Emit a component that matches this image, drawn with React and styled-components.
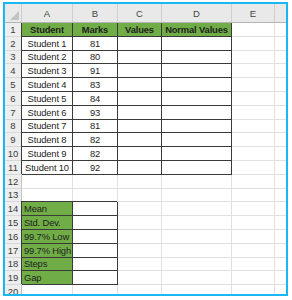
import React from "react";
import styled, { createGlobalStyle } from "styled-components";

const GlobalStyle = createGlobalStyle`
  html, body {
    margin: 0;
    padding: 0;
    background: #ffffff;
  }
  body {
    font-family: "Liberation Sans", Arial, sans-serif;
  }
`;

const Page = styled.div`
  width: 292px;
  height: 300px;
  padding: 2px 0 0 3px;
  box-sizing: border-box;
`;

const Frame = styled.div`
  width: 285px;
  height: 294px;
  box-sizing: border-box;
  border: 2px solid #1ab8f3;
  overflow: hidden;
  background: #fff;
`;

const Sheet = styled.div`
  display: grid;
  grid-template-columns: 17px 51px 45px 44px 70px 43px 20px;
  grid-template-rows: 19px repeat(20, 13.8px);
  font-size: 9.4px;
  letter-spacing: -0.15px;
  color: #1e1e1e;
`;

const ColHead = styled.div`
  background: #e9e9e9;
  border-right: 1px solid #cfcfcf;
  border-bottom: 1px solid #b4b4b4;
  display: flex;
  align-items: center;
  justify-content: center;
  color: #444;
  font-size: 9.5px;
  letter-spacing: 0;
  position: relative;
`;

const Corner = styled(ColHead)`
  &::after {
    content: "";
    position: absolute;
    right: 2px;
    bottom: 2px;
    width: 0;
    height: 0;
    border-left: 9px solid transparent;
    border-bottom: 9px solid #c3c3c3;
  }
`;

const RowHead = styled.div`
  background: #eeeeee;
  border-right: 1px solid #c3c3c3;
  border-bottom: 1px solid #d8d8d8;
  display: flex;
  align-items: center;
  justify-content: center;
  color: #3a3a3a;
  font-size: 9.5px;
  letter-spacing: 0;
`;

const Cell = styled.div`
  box-sizing: border-box;
  display: flex;
  align-items: center;
  justify-content: ${({ $left }) => ($left ? "flex-start" : "center")};
  padding-left: ${({ $left }) => ($left ? "2px" : "0")};
  white-space: nowrap;
  overflow: hidden;
  background: ${({ $green }) => ($green ? "#70ad47" : "#fff")};
  font-weight: ${({ $bold }) => ($bold ? 700 : 400)};
  border-right: 1px solid ${({ $boxed }) => ($boxed ? "#3a3a3a" : "#e0e0e0")};
  border-bottom: 1px solid ${({ $boxed }) => ($boxed ? "#3a3a3a" : "#e0e0e0")};
  box-shadow: ${({ $boxed }) => ($boxed ? "-1px -1px 0 #3a3a3a" : "none")};
`;

const cols = ["A", "B", "C", "D", "E", ""];

const marks = [81, 80, 91, 83, 84, 93, 81, 82, 82, 92];

const stats = ["Mean", "Std. Dev.", "99.7% Low", "99.7% High", "Steps", "Gap"];

const App = () => {
  const rows = [];
  for (let r = 1; r <= 20; r++) {
    const cells = [];
    if (r === 1) {
      cells.push(
        <Cell key="a" $green $boxed $bold>Student</Cell>,
        <Cell key="b" $green $boxed $bold>Marks</Cell>,
        <Cell key="c" $green $boxed $bold>Values</Cell>,
        <Cell key="d" $green $boxed $bold>Normal Values</Cell>
      );
    } else if (r <= 11) {
      cells.push(
        <Cell key="a" $boxed>Student {r - 1}</Cell>,
        <Cell key="b" $boxed>{marks[r - 2]}</Cell>,
        <Cell key="c" $boxed />,
        <Cell key="d" $boxed />
      );
    } else if (r >= 14 && r <= 19) {
      cells.push(
        <Cell key="a" $green $boxed $left>{stats[r - 14]}</Cell>,
        <Cell key="b" $boxed />,
        <Cell key="c" />,
        <Cell key="d" />
      );
    } else {
      cells.push(<Cell key="a" />, <Cell key="b" />, <Cell key="c" />, <Cell key="d" />);
    }
    rows.push(
      <React.Fragment key={r}>
        <RowHead>{r}</RowHead>
        {cells}
        <Cell />
        <Cell />
      </React.Fragment>
    );
  }

  return (
    <Page>
      <GlobalStyle />
      <Frame>
        <Sheet>
          <Corner />
          {cols.map((c, i) => (
            <ColHead key={i}>{c}</ColHead>
          ))}
          {rows}
        </Sheet>
      </Frame>
    </Page>
  );
};

export default App;
